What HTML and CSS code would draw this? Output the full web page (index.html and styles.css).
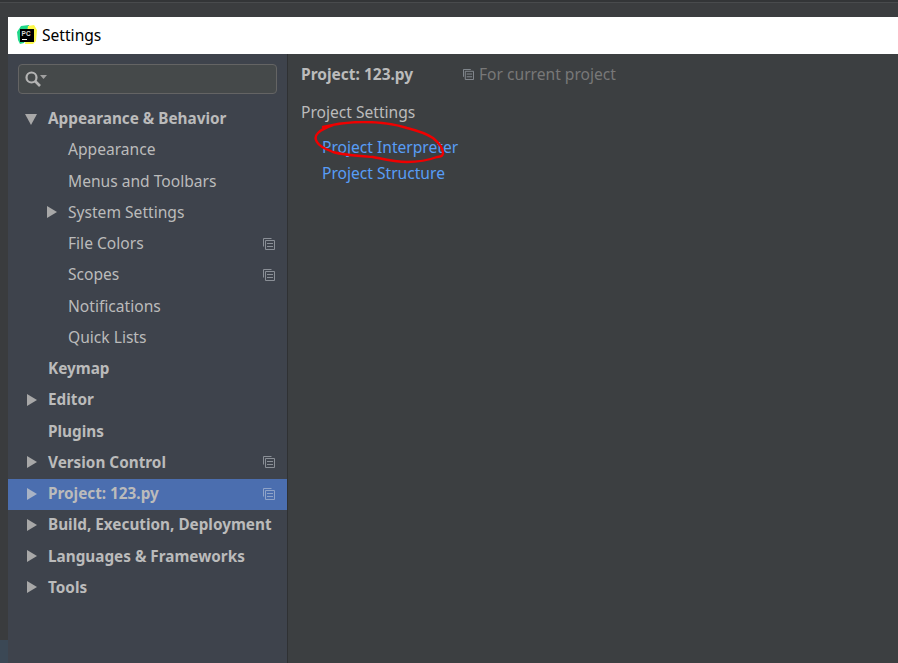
FILE: index.html
```html
<!DOCTYPE html>
<html lang="en">
<head>
<meta charset="utf-8">
<title>Settings</title>
<link rel="stylesheet" href="styles.css">
</head>
<body>
<svg width="0" height="0" class="defs">
  <symbol id="copy" viewBox="0 0 12 12">
    <path d="M.5 8.500V.5h8M2.500 2.500h9v9h-9z" fill="none" stroke="currentColor"/>
    <path d="M4 5.500h6M4 8.500h6" fill="none" stroke="currentColor"/>
  </symbol>
</svg>
<div class="backdrop-top"></div>
<div class="stage">
  <div class="backdrop-left"><div class="backdrop-blue"></div></div>
  <div class="window">
    <header class="titlebar">
      <svg class="logo" width="20" height="20" viewBox="0 0 20 20">
        <path d="M0 7 4 1l8-1 1 3-6 15-4 1-2-4z" fill="#21d789"/>
        <path d="M11 1l6-1 3 5-1 11-3 3-8 0z" fill="#fcf84a"/>
        <rect x="3" y="4" width="14" height="13" fill="#000"/>
        <rect x="5" y="14" width="5" height="1" fill="#fff"/>
        <text x="4.600" y="11" class="logo-text">PC</text>
      </svg>
      <span class="title">Settings</span>
    </header>
    <div class="body">
      <nav class="sidebar">
        <div class="search">
          <svg width="22" height="16" viewBox="0 0 22 16">
            <circle cx="6.500" cy="6.500" r="5" fill="none" stroke="#b4b4b4" stroke-width="2.200"/>
            <path d="M10 10l5 5" stroke="#b4b4b4" stroke-width="2.600"/>
            <path d="M15 4h7l-3.500 4z" fill="#a0a0a0"/>
          </svg>
        </div>
        <ul class="tree">
          <li class="row bold"><i class="arrow down"></i>Appearance &amp; Behavior</li>
          <li class="row sub">Appearance</li>
          <li class="row sub">Menus and Toolbars</li>
          <li class="row sub"><i class="arrow"></i>System Settings</li>
          <li class="row sub">File Colors<svg class="copy"><use href="#copy"/></svg></li>
          <li class="row sub">Scopes<svg class="copy"><use href="#copy"/></svg></li>
          <li class="row sub">Notifications</li>
          <li class="row sub">Quick Lists</li>
          <li class="row bold">Keymap</li>
          <li class="row bold"><i class="arrow"></i>Editor</li>
          <li class="row bold">Plugins</li>
          <li class="row bold"><i class="arrow"></i>Version Control<svg class="copy"><use href="#copy"/></svg></li>
          <li class="row bold selected"><i class="arrow"></i>Project: 123.py<svg class="copy"><use href="#copy"/></svg></li>
          <li class="row bold"><i class="arrow"></i>Build, Execution, Deployment</li>
          <li class="row bold"><i class="arrow"></i>Languages &amp; Frameworks</li>
          <li class="row bold"><i class="arrow"></i>Tools</li>
        </ul>
      </nav>
      <main class="content">
        <div class="heading">
          <strong class="crumb">Project: 123.py</strong>
          <span class="scope"><svg class="copy-inline"><use href="#copy"/></svg>For current project</span>
        </div>
        <div class="section">Project Settings</div>
        <a class="link">Project Interpreter</a>
        <a class="link">Project Structure</a>
        <svg class="scribble" width="136" height="46" viewBox="0 0 136 46">
          <path d="M10 6C22 3 36 1 50 1C66 1 82 3 94 7C106 10 114 13 120 17C126 22 130 27 130 32C130 35 128 36 124 36C116 39 104 41 94 41C82 41 70 38 60 36C46 35 30 34 20 31C12 28 6 25 4 21C2 18 2 15 5 12C9 8 14 6 20 4" fill="none" stroke="#f00000" stroke-width="2.400" stroke-linecap="round"/>
        </svg>
      </main>
    </div>
  </div>
</div>
</body>
</html>
```
FILE: styles.css
```css
* { box-sizing: border-box; }
html, body { margin: 0; height: 100%; overflow: hidden; background: #3c3f41; }
body { display: flex; flex-direction: column; font-family: "Noto Sans", "Open Sans", sans-serif; font-size: 15.600px; }
.defs { position: absolute; }
.backdrop-top { height: 17px; flex: none; background: #3b3d3f; border-top: 2px solid #333537; box-shadow: inset 0 1px 0 #494b4d; }
.stage { flex: 1; display: flex; min-height: 0; }
.backdrop-left { width: 8px; flex: none; background: #3a3c3e; display: flex; flex-direction: column; justify-content: flex-end; }
.backdrop-blue { height: 23px; background: #3b4855; }
.window { flex: 1; display: flex; flex-direction: column; min-width: 0; }
.titlebar { height: 37px; flex: none; background: #fff; display: flex; align-items: center; padding: 0 0 2px 9px; gap: 5px; }
.logo { flex: none; }
.logo-text { font: bold 6.500px "Liberation Sans", sans-serif; fill: #ddd; }
.title { font-size: 15.600px; color: #000; }
.body { flex: 1; display: flex; min-height: 0; }
.sidebar { width: 280px; flex: none; background: #3e434c; border-right: 1px solid #2f3133; padding-top: 10px; }
.search { height: 30px; margin: 0 10px; background: #45494a; border: 1px solid #646464; border-radius: 4px; padding: 6px 0 0 6px; display: flex; align-items: flex-start; }
.tree { list-style: none; margin: 9.600px 0 0; padding: 0; }
.row { height: 31.250px; display: flex; align-items: center; padding: 0 0 2px 40px; color: #bbb; position: relative; white-space: nowrap; }
.row.sub { padding-left: 60px; font-weight: 400; }
.row.bold { font-weight: 700; font-size: 15.300px; }
.row.selected { background: #4b6eaf; }
.arrow { position: absolute; left: 19px; top: 9px; width: 0; height: 0; border-left: 10px solid #a8a8a8; border-top: 6px solid transparent; border-bottom: 6px solid transparent; }
.sub .arrow { left: 39px; }
.arrow.down { left: 17px; top: 10px; border-top: 11px solid #a8a8a8; border-left: 6.500px solid transparent; border-right: 6.500px solid transparent; border-bottom: 0; }
.selected .arrow { border-left-color: #a9b3c5; }
.copy { position: absolute; left: 255px; top: 9px; width: 12px; height: 12px; color: #8a8f96; }
.selected .copy { color: #8fa3c8; }
.content { flex: 1; background: #3c3f41; position: relative; padding: 10px 0 0 13px; color: #bbb; min-width: 0; }
.heading { display: flex; align-items: center; height: 20px; }
.crumb { font-weight: 700; font-size: 15.500px; width: 162px; }
.scope { display: flex; align-items: center; gap: 5px; color: #787878; }
.copy-inline { width: 11px; height: 11px; color: #8a8f96; }
.section { margin-top: 18px; height: 20px; line-height: 20px; }
.link { display: block; margin-left: 21px; color: #589df6; height: 26px; line-height: 26px; }
.section + .link { margin-top: 12px; }
.scribble { position: absolute; left: 25px; top: 67px; }
```
